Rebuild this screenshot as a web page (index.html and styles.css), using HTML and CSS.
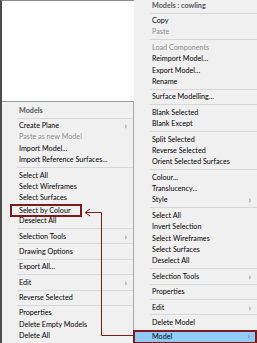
FILE: index.html
```html
<!DOCTYPE html>
<html lang="en">
<head>
    <meta charset="UTF-8">
    <title>Models context menus</title>
    <link rel="stylesheet" href="styles.css">
</head>
<body>

    <div class="stage">
        <div class="left-col">
            <div class="canvas"></div>

            <ul class="menu menu-left">
                <li class="header">Models</li>
                <li class="sep"></li>
                <li class="sub">Create Plane</li>
                <li class="disabled">Paste as new Model</li>
                <li>Import Model...</li>
                <li>Import Reference Surfaces...</li>
                <li class="sep"></li>
                <li>Select All</li>
                <li>Select Wireframes</li>
                <li>Select Surfaces</li>
                <li><span class="mark">Select by Colour</span></li>
                <li>Deselect All</li>
                <li class="sep"></li>
                <li class="sub">Selection Tools</li>
                <li class="sep"></li>
                <li>Drawing Options</li>
                <li class="sep"></li>
                <li>Export All...</li>
                <li class="sep"></li>
                <li class="sub">Edit</li>
                <li class="sep"></li>
                <li>Reverse Selected</li>
                <li class="sep"></li>
                <li>Properties</li>
                <li>Delete Empty Models</li>
                <li>Delete All</li>
            </ul>
        </div>

        <ul class="menu menu-right">
            <li class="header">Models : cowling</li>
            <li class="sep"></li>
            <li>Copy</li>
            <li class="disabled">Paste</li>
            <li class="sep"></li>
            <li class="disabled">Load Components</li>
            <li>Reimport Model...</li>
            <li>Export Model...</li>
            <li>Rename</li>
            <li class="sep"></li>
            <li>Surface Modelling...</li>
            <li class="sep"></li>
            <li>Blank Selected</li>
            <li>Blank Except</li>
            <li class="sep"></li>
            <li>Split Selected</li>
            <li>Reverse Selected</li>
            <li>Orient Selected Surfaces</li>
            <li class="sep"></li>
            <li>Colour...</li>
            <li>Translucency...</li>
            <li class="sub">Style</li>
            <li class="sep"></li>
            <li>Select All</li>
            <li>Invert Selection</li>
            <li>Select Wireframes</li>
            <li>Select Surfaces</li>
            <li>Deselect All</li>
            <li class="sep"></li>
            <li class="sub">Selection Tools</li>
            <li class="sep"></li>
            <li>Properties</li>
            <li class="sep"></li>
            <li class="sub">Edit</li>
            <li class="sep"></li>
            <li>Delete Model</li>
            <li class="sep"></li>
            <li class="sub active">Model</li>
        </ul>

        <!-- arrow from the highlighted "Model" item back to "Select by Colour" -->
        <svg class="connector" width="257" height="343" viewBox="0 0 257 343">
            <polyline points="133,335.5 101.5,335.5 101.5,212.5 86,212.5" fill="none" stroke="#7d1a1a" stroke-width="1"/>
            <polyline points="90,209 85,212.5 90,216" fill="none" stroke="#7d1a1a" stroke-width="1"/>
        </svg>
    </div>

</body>
</html>
```

FILE: styles.css
```css
body {
    margin: 0;
    padding: 0;
    background-color: #f0f0f0;
    font-family: Lato, "Open Sans", sans-serif;
    font-size: 7.2px;
    color: #000;
}

.stage {
    position: relative;
    width: 257px;
    height: 343px;
    display: grid;
    grid-template-columns: 134px 123px;
    overflow: hidden;
}

.left-col {
    display: flex;
    flex-direction: column;
    border-left: 2px solid #4d4d4d;
    border-top: 1px solid #8c8c8c;
}

.canvas {
    height: 100px;
    background-color: #fff;
}

.menu {
    list-style-type: none;
    margin: 0;
    padding: 0;
    background-color: #f0f0f0;
}

.menu-left {
    flex: 1;
    padding-top: 3px;
    border-top: 1px solid #9a9a9a;
    border-right: 1px solid #a8a8a8;
    border-bottom: 1px solid #d0d0d0;
}

.menu li {
    position: relative;
    height: 11.4px;
    line-height: 11.4px;
    white-space: nowrap;
    padding-left: 17px;
}

.menu-left li {
    padding-left: 17px;
}

.menu-right li {
    padding-left: 18px;
}

.menu li.header {
    height: 11px;
    line-height: 11px;
    font-weight: 700;
    color: #555;
}

.menu li.sep {
    height: 1px;
    margin: 1.5px 0 1.5px 15px;
    padding: 0;
    background-color: #d7d7d7;
}

.menu-right li.sep {
    margin-left: 16px;
}

.menu li.disabled {
    color: #8d8d8d;
}

.menu li.sub::after {
    content: "\203A";
    position: absolute;
    right: 6px;
    top: 0;
    color: #777;
    font-size: 9px;
}

.menu li.active {
    box-sizing: border-box;
    height: 14px;
    line-height: 10px;
    margin: -2px 0 0 -1px;
    padding-left: 17px;
    background-color: #91c9f7;
    border: 2px solid #7d1a1a;
}

.menu li.active::after {
    top: -1px;
    right: 5px;
}

.mark {
    display: inline-block;
    margin-left: -9px;
    padding: 0 9px 0 7px;
    border: 2px solid #7d1a1a;
    line-height: 9px;
}

.connector {
    position: absolute;
    left: 0;
    top: 0;
    pointer-events: none;
}
```
